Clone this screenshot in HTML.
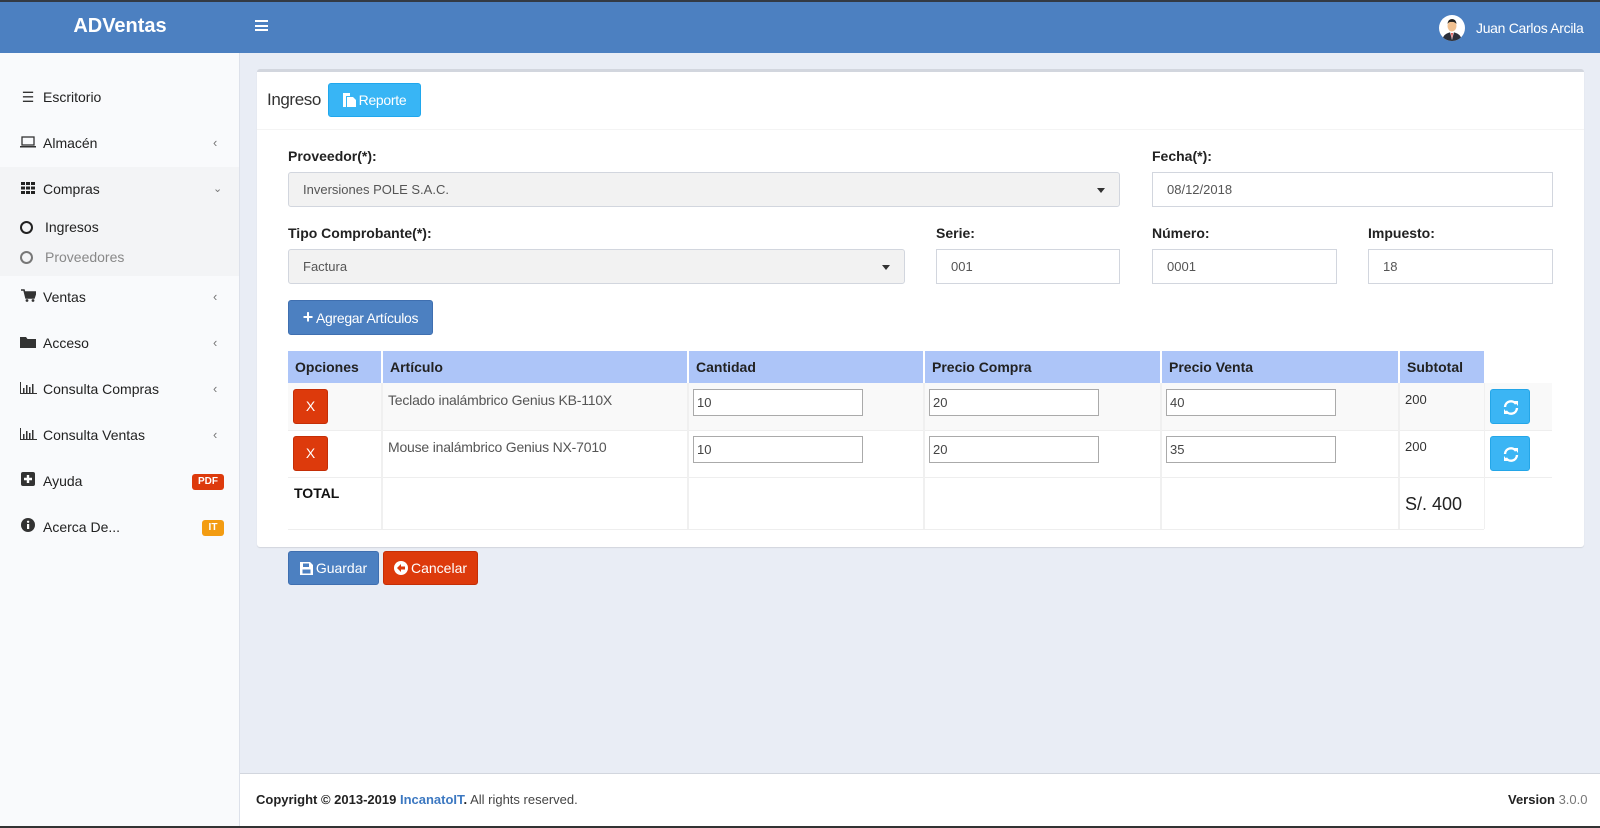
<!DOCTYPE html>
<html><head><meta charset="utf-8"><style>
*{box-sizing:border-box;margin:0;padding:0}
body{width:1600px;height:828px;overflow:hidden;background:#e9edf5;font-family:"Liberation Sans",sans-serif;font-size:14px;color:#333;position:relative}
.a{position:absolute}
#top{left:0;top:0;width:1600px;height:53px;background:#4c80c1;border-top:2px solid #333a44}
#side{left:0;top:53px;width:240px;height:775px;background:#f9fafc;border-right:1px solid #dde1ea}
.mi{position:absolute;left:0;width:239px;height:46px;line-height:46px;font-size:14px;color:#222}
.mi .ic{position:absolute;left:19px;top:0;width:18px;text-align:center;color:#333}
.mi .t{position:absolute;left:43px}
.mi .ch{position:absolute;left:213px;color:#777;font-size:13px}
.lbl{position:absolute;font-weight:bold;font-size:14px;color:#222}
.inp{position:absolute;border:1px solid #d2d6de;background:#fff;color:#555;font-size:13px;padding-left:14px;display:flex;align-items:center}
.sel{background:#f2f2f2;border-radius:3px}
.th{position:absolute;top:351px;height:32px;background:#adc5f8;font-weight:bold;line-height:32px;padding-left:7px;color:#222}
.x{position:absolute;left:293px;width:35px;height:35px;background:#dd3a0c;border:1px solid #c42e06;border-radius:3px;color:#fff;text-align:center;line-height:33px;font-size:14px}
.ti{position:absolute;height:27px;border:1px solid #aaa;background:#fff;padding-left:3px;line-height:25px;font-size:13px;color:#444}
.rf{position:absolute;left:1490px;width:40px;height:35px;background:#3bb5f4;border:1px solid #24a6e8;border-radius:3px}
.btn{position:absolute;color:#fff;border-radius:3px;font-size:14px;display:flex;align-items:center;justify-content:center;gap:3px}
</style></head><body>
<div class="a" id="top"></div>
<div class="a" style="left:0;top:15px;width:240px;text-align:center;color:#fff;font-weight:bold;font-size:20px">ADVentas</div>
<div class="a" style="left:255px;top:20px;width:13px;height:11px;border-top:2px solid #fff;border-bottom:2px solid #fff"><div style="margin-top:2.5px;height:2px;background:#fff"></div></div>
<div class="a" style="left:1439px;top:15px;width:26px;height:26px;border-radius:50%;background:#fff;overflow:hidden">
<svg width="26" height="26" viewBox="0 0 26 26"><path d="M3 26 Q4 18 13 17 Q22 18 23 26Z" fill="#2b2f3a"/><path d="M11 17 L13 25 L15 17Z" fill="#fff"/><path d="M12.3 18 L13 24 L13.7 18Z" fill="#c00"/><ellipse cx="13" cy="11" rx="4.5" ry="5.5" fill="#f0c090"/><path d="M8.5 9 Q9 4 13 4 Q17 4 17.5 9 Q15 6.5 13 7 Q10 6.5 8.5 9Z" fill="#222"/></svg></div>
<div class="a" style="left:1476px;top:20px;color:#fff;font-size:14px;letter-spacing:-0.3px">Juan Carlos Arcila</div>

<div class="a" id="side"></div>
<div class="a" style="left:0;top:167px;width:239px;height:109px;background:#f3f4f6"></div>
<div class="mi" style="top:74px"><span class="ic">☰</span><span class="t">Escritorio</span></div>
<div class="mi" style="top:120px"><span class="ic"><svg width="16" height="12"><rect x="2" y="1" width="12" height="8" fill="none" stroke="#333" stroke-width="1.3"/><rect x="0" y="10" width="16" height="1.5" fill="#333"/></svg></span><span class="t">Almacén</span><span class="ch">‹</span></div>
<div class="mi" style="top:166px"><span class="ic"><svg width="14" height="12"><g fill="#222"><rect x="0" y="0" width="4" height="3"/><rect x="5" y="0" width="4" height="3"/><rect x="10" y="0" width="4" height="3"/><rect x="0" y="4.5" width="4" height="3"/><rect x="5" y="4.5" width="4" height="3"/><rect x="10" y="4.5" width="4" height="3"/><rect x="0" y="9" width="4" height="3"/><rect x="5" y="9" width="4" height="3"/><rect x="10" y="9" width="4" height="3"/></g></svg></span><span class="t">Compras</span><span class="ch" style="font-size:11px">⌄</span></div>
<div class="a" style="left:20px;top:221px;width:13px;height:13px;border:2px solid #222;border-radius:50%"></div>
<div class="a" style="left:45px;top:219px;color:#222">Ingresos</div>
<div class="a" style="left:20px;top:251px;width:13px;height:13px;border:2px solid #777;border-radius:50%"></div>
<div class="a" style="left:45px;top:249px;color:#888">Proveedores</div>
<div class="mi" style="top:274px"><span class="ic"><svg width="15" height="13"><path d="M0 1h3l2 8h8l2-6H4" fill="none" stroke="#333" stroke-width="1.6"/><path d="M4 3h11l-2 6H5Z" fill="#333"/><circle cx="6" cy="11.5" r="1.4" fill="#333"/><circle cx="12" cy="11.5" r="1.4" fill="#333"/></svg></span><span class="t">Ventas</span><span class="ch">‹</span></div>
<div class="mi" style="top:320px"><span class="ic"><svg width="16" height="12"><path d="M0 1h6l1.5 2H16v9H0Z" fill="#333"/></svg></span><span class="t">Acceso</span><span class="ch">‹</span></div>
<div class="mi" style="top:366px"><span class="ic"><svg width="17" height="12"><path d="M0.5 0v11.5H17" stroke="#333" fill="none"/><g fill="#333"><rect x="3" y="6" width="1.5" height="5"/><rect x="6" y="3" width="1.5" height="8"/><rect x="9" y="5" width="1.5" height="6"/><rect x="12" y="2" width="1.5" height="9"/></g></svg></span><span class="t">Consulta Compras</span><span class="ch">‹</span></div>
<div class="mi" style="top:412px"><span class="ic"><svg width="17" height="12"><path d="M0.5 0v11.5H17" stroke="#333" fill="none"/><g fill="#333"><rect x="3" y="6" width="1.5" height="5"/><rect x="6" y="3" width="1.5" height="8"/><rect x="9" y="5" width="1.5" height="6"/><rect x="12" y="2" width="1.5" height="9"/></g></svg></span><span class="t">Consulta Ventas</span><span class="ch">‹</span></div>
<div class="mi" style="top:458px"><span class="ic"><svg width="14" height="14"><rect width="14" height="14" rx="2" fill="#333"/><path d="M7 3v8M3 7h8" stroke="#fff" stroke-width="2.4"/></svg></span><span class="t">Ayuda</span></div>
<div class="a" style="left:192px;top:474px;width:32px;height:16px;background:#dd3a0c;border-radius:3px;color:#fff;font-size:10px;font-weight:bold;text-align:center;line-height:16px">PDF</div>
<div class="mi" style="top:504px"><span class="ic"><svg width="14" height="14"><circle cx="7" cy="7" r="7" fill="#333"/><rect x="6" y="6" width="2.2" height="5" fill="#fff"/><circle cx="7.1" cy="3.8" r="1.2" fill="#fff"/></svg></span><span class="t">Acerca De...</span></div>
<div class="a" style="left:202px;top:520px;width:22px;height:16px;background:#f39c12;border-radius:3px;color:#fff;font-size:10px;font-weight:bold;text-align:center;line-height:16px">IT</div>

<div class="a" style="left:257px;top:69px;width:1327px;height:478px;background:#fff;border-top:3px solid #d2d6de;border-radius:3px;box-shadow:0 1px 1px rgba(0,0,0,.1)"></div>
<div class="a" style="left:257px;top:129px;width:1327px;height:1px;background:#f4f4f4"></div>
<div class="a" style="left:267px;top:90px;font-size:17px;color:#333;letter-spacing:-0.4px">Ingreso</div>
<div class="btn" style="left:328px;top:83px;width:93px;height:34px;background:#38b5f5;border:1px solid #1fa7ed;letter-spacing:-0.3px"><svg width="13" height="14"><path d="M0 0h7v3H3v11H0Z" fill="#fff"/><path d="M4 4h6l3 3v7H4Z" fill="#fff"/></svg>Reporte</div>

<div class="lbl" style="left:288px;top:148px">Proveedor(*):</div>
<div class="inp sel" style="left:288px;top:172px;width:832px;height:35px">Inversiones POLE S.A.C.<span style="position:absolute;right:14px;top:15px;border:4px solid transparent;border-top:5px solid #333"></span></div>
<div class="lbl" style="left:1152px;top:148px">Fecha(*):</div>
<div class="inp" style="left:1152px;top:172px;width:401px;height:35px">08/12/2018</div>

<div class="lbl" style="left:288px;top:225px">Tipo Comprobante(*):</div>
<div class="inp sel" style="left:288px;top:249px;width:617px;height:35px">Factura<span style="position:absolute;right:14px;top:15px;border:4px solid transparent;border-top:5px solid #333"></span></div>
<div class="lbl" style="left:936px;top:225px">Serie:</div>
<div class="inp" style="left:936px;top:249px;width:184px;height:35px">001</div>
<div class="lbl" style="left:1152px;top:225px">Número:</div>
<div class="inp" style="left:1152px;top:249px;width:185px;height:35px">0001</div>
<div class="lbl" style="left:1368px;top:225px">Impuesto:</div>
<div class="inp" style="left:1368px;top:249px;width:185px;height:35px">18</div>

<div class="btn" style="left:288px;top:300px;width:145px;height:35px;background:#4c80c1;border:1px solid #3f6fb0;letter-spacing:-0.3px"><b style="font-size:18px">+</b>Agregar Artículos</div>

<div class="th" style="left:288px;width:93px">Opciones</div>
<div class="th" style="left:383px;width:304px">Artículo</div>
<div class="th" style="left:689px;width:234px">Cantidad</div>
<div class="th" style="left:925px;width:235px">Precio Compra</div>
<div class="th" style="left:1162px;width:236px">Precio Venta</div>
<div class="th" style="left:1400px;width:84px">Subtotal</div>
<div class="a" style="left:288px;top:383px;width:1264px;height:47px;background:#f9f9f9"></div>
<div class="a" style="left:288px;top:430px;width:1264px;height:1px;background:#eee"></div>
<div class="a" style="left:288px;top:477px;width:1264px;height:1px;background:#eee"></div>
<div class="a" style="left:288px;top:529px;width:1196px;height:1px;background:#eee"></div>
<div class="a" style="left:381px;top:383px;width:2px;height:146px;background:#f0f0f0"></div>
<div class="a" style="left:687px;top:383px;width:2px;height:146px;background:#f0f0f0"></div>
<div class="a" style="left:923px;top:383px;width:2px;height:146px;background:#f0f0f0"></div>
<div class="a" style="left:1160px;top:383px;width:2px;height:146px;background:#f0f0f0"></div>
<div class="a" style="left:1398px;top:383px;width:2px;height:146px;background:#f0f0f0"></div>
<div class="a" style="left:1484px;top:383px;width:1px;height:146px;background:#f0f0f0"></div>

<div class="x" style="top:389px">X</div>
<div class="a" style="left:388px;top:392px;color:#555;letter-spacing:-0.2px">Teclado inalámbrico Genius KB-110X</div>
<div class="ti" style="left:693px;top:389px;width:170px">10</div>
<div class="ti" style="left:929px;top:389px;width:170px">20</div>
<div class="ti" style="left:1166px;top:389px;width:170px">40</div>
<div class="a" style="left:1405px;top:392px;color:#333;font-size:13px">200</div>
<div class="rf" style="top:389px"><svg width="40" height="35"><g fill="none" stroke="#fff" stroke-width="2.4"><path d="M14 17a6 6 0 0 1 11-3"/><path d="M26 18a6 6 0 0 1-11 3"/></g><path d="M23 11l4 0 0 5z M17 24l-4 0 0-5z" fill="#fff"/></svg></div>

<div class="x" style="top:436px">X</div>
<div class="a" style="left:388px;top:439px;color:#555;letter-spacing:-0.2px">Mouse inalámbrico Genius NX-7010</div>
<div class="ti" style="left:693px;top:436px;width:170px">10</div>
<div class="ti" style="left:929px;top:436px;width:170px">20</div>
<div class="ti" style="left:1166px;top:436px;width:170px">35</div>
<div class="a" style="left:1405px;top:439px;color:#333;font-size:13px">200</div>
<div class="rf" style="top:436px"><svg width="40" height="35"><g fill="none" stroke="#fff" stroke-width="2.4"><path d="M14 17a6 6 0 0 1 11-3"/><path d="M26 18a6 6 0 0 1-11 3"/></g><path d="M23 11l4 0 0 5z M17 24l-4 0 0-5z" fill="#fff"/></svg></div>

<div class="a" style="left:294px;top:485px;font-weight:bold;color:#111">TOTAL</div>
<div class="a" style="left:1405px;top:494px;font-size:18px;color:#222">S/. 400</div>

<div class="btn" style="left:288px;top:551px;width:91px;height:34px;background:#4c80c1;border:1px solid #3f6fb0"><svg width="13" height="13"><path d="M0 0h10l3 3v10H0Z" fill="#fff"/><rect x="3" y="1.5" width="6" height="3.5" fill="#4c80c1"/><rect x="2.5" y="7.5" width="8" height="4" fill="#4c80c1"/></svg>Guardar</div>
<div class="btn" style="left:383px;top:551px;width:95px;height:34px;background:#dd3a0c;border:1px solid #c42e06"><svg width="14" height="14"><circle cx="7" cy="7" r="7" fill="#fff"/><path d="M3 7l4-4v2.5h4v3H7V11Z" fill="#dd3a0c"/></svg>Cancelar</div>

<div class="a" style="left:240px;top:773px;width:1360px;height:53px;background:#fff;border-top:1px solid #d2d6de"></div>
<div class="a" style="left:256px;top:792px;font-size:13px;color:#444"><b style="color:#222">Copyright © 2013-2019 <span style="color:#3c78c1">IncanatoIT</span>.</b> All rights reserved.</div>
<div class="a" style="left:1508px;top:792px;font-size:13px;color:#777"><b style="color:#222">Version</b> 3.0.0</div>
<div class="a" style="left:0;top:826px;width:1600px;height:2px;background:#333"></div>
</body></html>
